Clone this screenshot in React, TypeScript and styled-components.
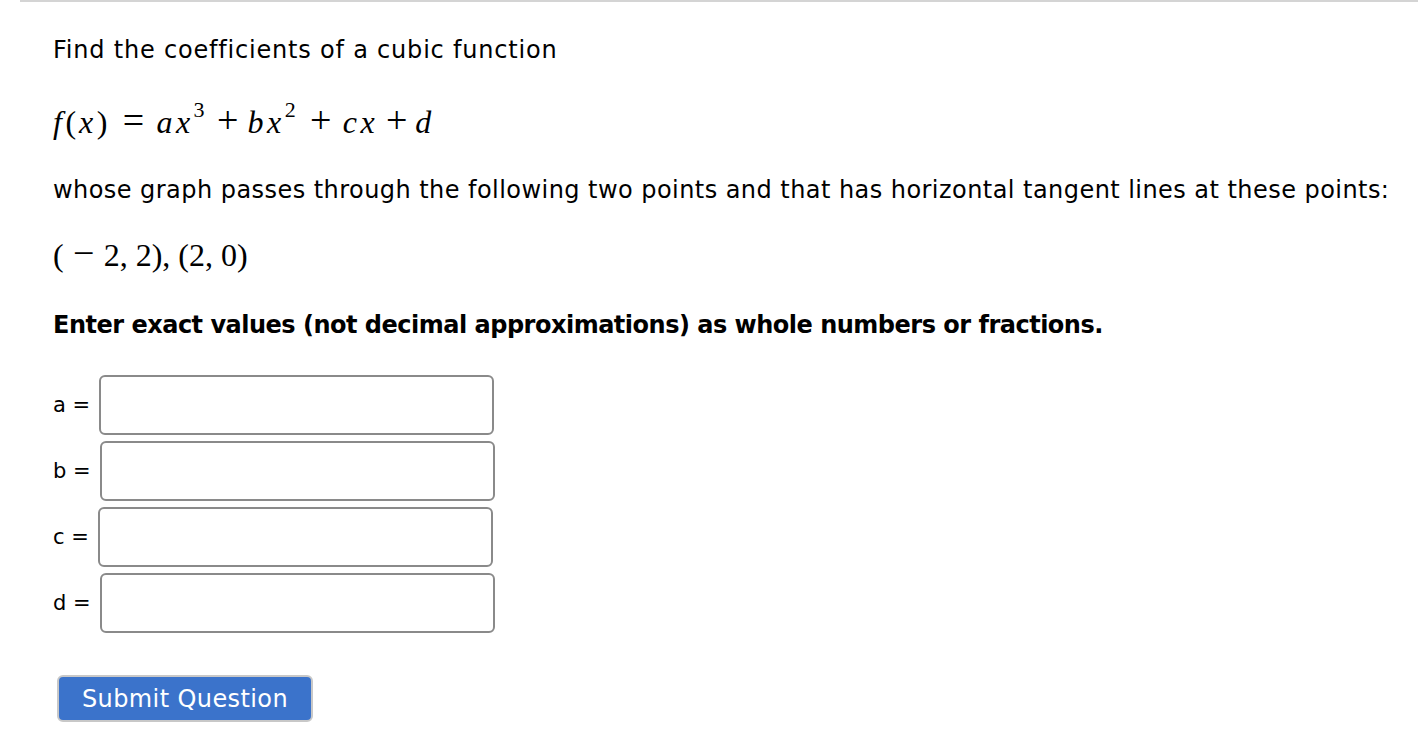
import React from "react";
import styled, { createGlobalStyle } from "styled-components";

const GlobalStyle = createGlobalStyle`
  html, body { margin: 0; padding: 0; background: #ffffff; }
  body { font-family: "DejaVu Sans", Verdana, sans-serif; color: #000; }
`;

const Page = styled.div`
  width: 1418px;
  min-height: 752px;
  box-sizing: border-box;
`;

const TopRule = styled.div`
  margin-left: 20px;
  height: 2px;
  background: #d4d4d4;
`;

const Question = styled.div`
  padding: 33px 0 0 53px;
  display: flex;
  flex-direction: column;
  align-items: flex-start;
`;

const Para = styled.p<{ $gap?: number; $bold?: boolean; $ls?: number }>`
  margin: ${(p) => p.$gap ?? 0}px 0 0 0;
  font-size: 24px;
  line-height: 30px;
  font-weight: ${(p) => (p.$bold ? 700 : 400)};
  letter-spacing: ${(p) => p.$ls ?? 0}px;
  white-space: nowrap;
`;

const MathLine = styled.div<{ $gap: number; $ls: number }>`
  margin-top: ${(p) => p.$gap}px;
  height: 34px;
  font-family: "Liberation Serif", "Times New Roman", serif;
  font-size: 32px;
  line-height: 34px;
  letter-spacing: ${(p) => p.$ls}px;
  white-space: nowrap;
  display: flex;
  align-items: baseline;
`;

const V = styled.i`
  font-style: italic;
  letter-spacing: 3.5px;
`;

const Op = styled.span<{ $w: number }>`
  display: inline-block;
  width: ${(p) => p.$w}px;
  text-align: center;
  font-size: 38px;
  line-height: 34px;
  letter-spacing: 0;
`;

const Sup = styled.span`
  font-size: 22px;
  line-height: 0;
  position: relative;
  top: -16px;
`;

const Fields = styled.div`
  margin-top: 35px;
  display: flex;
  flex-direction: column;
  gap: 6px;
`;

const FieldRow = styled.label`
  display: flex;
  align-items: center;
  height: 60px;
`;

const FieldLabel = styled.span`
  font-size: 21px;
  margin-right: 9px;
  white-space: nowrap;
`;

const Input = styled.input`
  box-sizing: border-box;
  width: 395px;
  height: 60px;
  border: 2px solid #8a8a8a;
  border-radius: 6px;
  background: #fff;
  padding: 0 10px;
  font: 22px "DejaVu Sans", sans-serif;
  outline: none;
`;

const SubmitButton = styled.button`
  margin: 42px 0 0 4px;
  box-sizing: border-box;
  width: 256px;
  height: 47px;
  background: #3b73cb;
  border: 2px solid #c8c8c8;
  border-radius: 6px;
  color: #ffffff;
  font-family: "DejaVu Sans", sans-serif;
  font-size: 24px;
  letter-spacing: 0.4px;
  padding: 0;
  cursor: pointer;
`;

const fields = ["a", "b", "c", "d"];

export default function App() {
  return (
    <Page>
      <GlobalStyle />
      <TopRule />
      <Question>
        <Para $ls={0.8}>Find the coefficients of a cubic function</Para>
        <MathLine $gap={38} $ls={3}>
          <V>f</V>(<V>x</V>)<Op $w={46}>=</Op>
          <V>ax</V>
          <Sup>3</Sup>
          <Op $w={40}>+</Op>
          <V>bx</V>
          <Sup>2</Sup>
          <Op $w={44}>+</Op>
          <V>cx</V>
          <Op $w={37}>+</Op>
          <V>d</V>
        </MathLine>
        <Para $gap={38} $ls={0.45}>
          whose graph passes through the following two points and that has horizontal tangent lines at these points:
        </Para>
        <MathLine $gap={31} $ls={0}>
          (<Op $w={40}>−</Op>2,&nbsp;2),&nbsp;(2,&nbsp;0)
        </MathLine>
        <Para $gap={40} $bold $ls={-0.5}>
          Enter exact values (not decimal approximations) as whole numbers or fractions.
        </Para>
        <Fields>
          {fields.map((f) => (
            <FieldRow key={f}>
              <FieldLabel>{f} =</FieldLabel>
              <Input type="text" aria-label={f} />
            </FieldRow>
          ))}
        </Fields>
        <SubmitButton type="button">Submit Question</SubmitButton>
      </Question>
    </Page>
  );
}
